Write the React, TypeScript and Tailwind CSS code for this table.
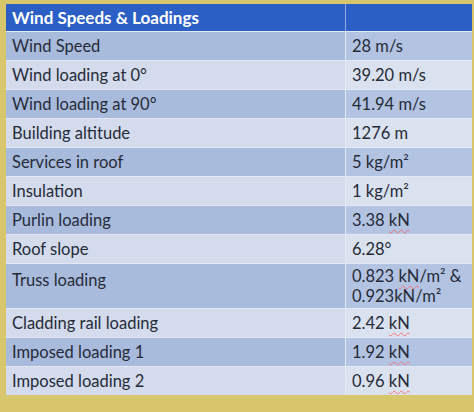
import React from 'react';

type Row = { label: string; value: React.ReactNode; tall?: boolean };

const Kn = () => (
  <span className="underline decoration-wavy decoration-red-400/80 decoration-1 underline-offset-[3px]">kN</span>
);

const rows: Row[] = [
  { label: 'Wind Speed', value: '28 m/s' },
  { label: 'Wind loading at 0°', value: '39.20 m/s' },
  { label: 'Wind loading at 90°', value: '41.94 m/s' },
  { label: 'Building altitude', value: '1276 m' },
  { label: 'Services in roof', value: <>5 kg/m²</> },
  { label: 'Insulation', value: <>1 kg/m²</> },
  { label: 'Purlin loading', value: <>3.38 <Kn /></> },
  { label: 'Roof slope', value: '6.28°' },
  {
    label: 'Truss loading',
    tall: true,
    value: (
      <>
        0.823 <Kn />/m² &amp;
        <br />
        0.923kN/m²
      </>
    ),
  },
  { label: 'Cladding rail loading', value: <>2.42 <Kn /></> },
  { label: 'Imposed loading 1', value: <>1.92 <Kn /></> },
  { label: 'Imposed loading 2', value: <>0.96 <Kn /></> },
];

export default function App() {
  return (
    <div
      className="w-[474px] h-[412px] overflow-hidden bg-[#d8c66c] pt-[4px] pl-[6px] pr-[2px]"
      style={{ fontFamily: 'Lato, "Open Sans", sans-serif' }}
    >
      <div className="grid grid-cols-[340px_1fr] text-[16.5px] text-[#262b38]">
        {/* Header */}
        <div className="h-[27px] bg-[#2b5fc6] flex items-center pl-[6px] text-[17px] text-white font-bold border-r border-[#8fa8de]">
          Wind Speeds &amp; Loadings
        </div>
        <div className="h-[27px] bg-[#2b5fc6]" />

        {rows.map((r, i) => {
          const dark = i % 2 === 0;
          const h = r.tall ? 'h-[45px]' : 'h-[29px]';
          return (
            <React.Fragment key={r.label}>
              <div
                className={`${h} flex ${r.tall ? 'items-start pt-[4px]' : 'items-center'} pl-[6px] border-t border-r border-[#e3e8f3] ${
                  dark ? 'bg-[#a9bbdd]' : 'bg-[#d3dbec]'
                }`}
              >
                {r.label}
              </div>
              <div
                className={`${h} flex items-center pl-[6px] border-t border-[#e3e8f3] leading-[20px] ${
                  dark ? 'bg-[#b3c3e2]' : 'bg-[#dae1ef]'
                }`}
              >
                <div>{r.value}</div>
              </div>
            </React.Fragment>
          );
        })}
      </div>
    </div>
  );
}
